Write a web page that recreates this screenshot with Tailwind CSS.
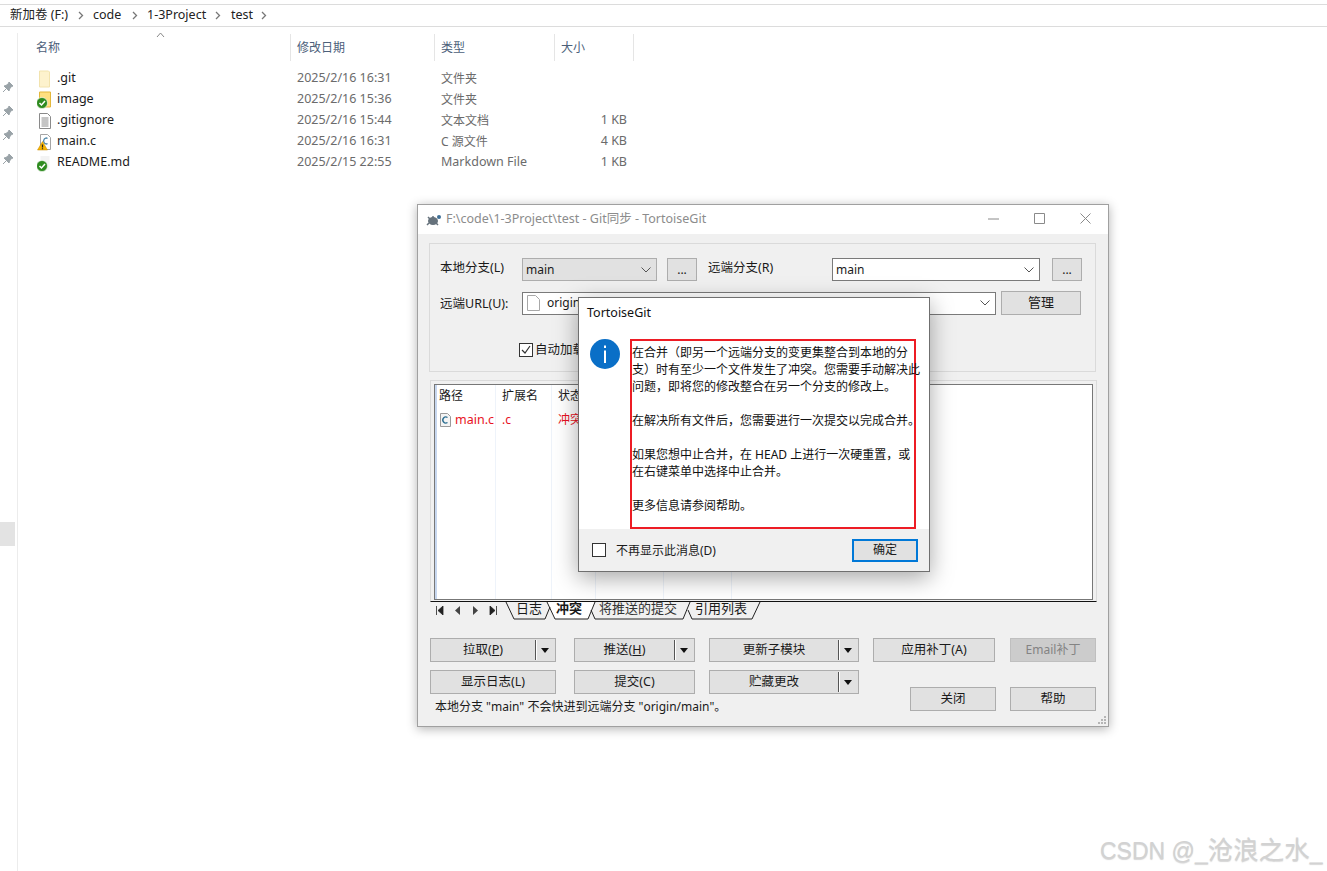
<!DOCTYPE html>
<html lang="zh-CN">
<head>
    <meta charset="UTF-8">
    <meta name="viewport" content="width=device-width, initial-scale=1.0">
    <title>TortoiseGit 合并冲突</title>
    <script src="https://cdn.jsdelivr.net/npm/@tailwindcss/browser@4"></script>
</head>
<body class="bg-white">
<div class="relative w-[1327px] h-[871px] overflow-hidden bg-white text-[12px] text-[#1a1a1a] [font-family:'Noto_Sans','Noto_Sans_CJK_SC',sans-serif]">

    <!-- address bar -->
    <div class="mt-[4px] h-[23px] border-y border-[#dcdcdc] flex items-center text-[12.5px] text-[#222]">
        <span class="ml-[10px] w-[68px]">新加卷 (F:)</span>
        <svg class="w-[6px] h-[9px]" viewBox="0 0 6 9"><path d="M1 1l3.500 3.500L1 8" fill="none" stroke="#777" stroke-width="1.300"/></svg>
        <span class="ml-[9px] w-[39px]">code</span>
        <svg class="w-[6px] h-[9px]" viewBox="0 0 6 9"><path d="M1 1l3.500 3.500L1 8" fill="none" stroke="#777" stroke-width="1.300"/></svg>
        <span class="ml-[9px] w-[68px]">1-3Project</span>
        <svg class="w-[6px] h-[9px]" viewBox="0 0 6 9"><path d="M1 1l3.500 3.500L1 8" fill="none" stroke="#777" stroke-width="1.300"/></svg>
        <span class="ml-[10px] w-[30px]">test</span>
        <svg class="w-[6px] h-[9px]" viewBox="0 0 6 9"><path d="M1 1l3.500 3.500L1 8" fill="none" stroke="#777" stroke-width="1.300"/></svg>
    </div>

    <div class="flex h-[844px]">
        <!-- quick access strip -->
        <div class="w-[18px] shrink-0 border-r border-[#ececec] mt-[6px]">
            <div class="pt-[48px] flex flex-col gap-[12px] pl-[2px]">
                <svg class="w-[12px] h-[12px]" viewBox="0 0 12 12"><path d="M7 1l4 4-1.500.5L7.500 8 7 10 2 5l2-.5L6.500 2.500zM4 8l-3 3" fill="#9aa3a8" stroke="#9aa3a8"/></svg>
                <svg class="w-[12px] h-[12px]" viewBox="0 0 12 12"><path d="M7 1l4 4-1.500.5L7.500 8 7 10 2 5l2-.5L6.500 2.500zM4 8l-3 3" fill="#9aa3a8" stroke="#9aa3a8"/></svg>
                <svg class="w-[12px] h-[12px]" viewBox="0 0 12 12"><path d="M7 1l4 4-1.500.5L7.500 8 7 10 2 5l2-.5L6.500 2.500zM4 8l-3 3" fill="#9aa3a8" stroke="#9aa3a8"/></svg>
                <svg class="w-[12px] h-[12px]" viewBox="0 0 12 12"><path d="M7 1l4 4-1.500.5L7.500 8 7 10 2 5l2-.5L6.500 2.500zM4 8l-3 3" fill="#9aa3a8" stroke="#9aa3a8"/></svg>
            </div>
            <div class="mt-[357px] w-[15px] h-[24px] bg-[#e3e3e3]"></div>
        </div>

        <!-- file list -->
        <div class="flex-1 relative">
            <div class="absolute left-[138px] top-[5px]">
                <svg class="w-[9px] h-[6px]" viewBox="0 0 9 6"><path d="M1 5l3.500-4L8 5" fill="none" stroke="#888" stroke-width="1"/></svg>
            </div>
            <div class="flex h-[27px] mt-[7px] text-[#4c607a]">
                <div class="w-[273px] pl-[18px] border-r border-[#e5e5e5] flex items-center">名称</div>
                <div class="w-[144px] pl-[6px] border-r border-[#e5e5e5] flex items-center">修改日期</div>
                <div class="w-[120px] pl-[6px] border-r border-[#e5e5e5] flex items-center">类型</div>
                <div class="w-[79px] pl-[6px] border-r border-[#e5e5e5] flex items-center">大小</div>
            </div>
            <div class="mt-[7px] pl-[19px] text-[#6b6b6b]">
                <div class="flex items-center h-[21px]">
                    <svg class="w-[20px] h-[18px] shrink-0" viewBox="0 0 20 18"><path d="M2.500 1h9l1 1v15h-10z" fill="#fdf2cd" stroke="#f2e3ae"/></svg>
                    <span class="w-[240px] text-[#1a1a1a] text-[12.5px]">.git</span>
                    <span class="w-[144px] text-[12.5px]">2025/2/16 16:31</span>
                    <span class="w-[120px]">文件夹</span>
                </div>
                <div class="flex items-center h-[21px]">
                    <svg class="w-[20px] h-[18px] shrink-0" viewBox="0 0 20 18"><path d="M2.500 1h11v15h-11z" fill="#ffdf80" stroke="#e3b73c"/><circle cx="5" cy="12" r="5.500" fill="#2e8b1f" stroke="#fff" stroke-width=".6"/><path d="M2.500 12l2 2 3.500-4" fill="none" stroke="#fff" stroke-width="1.500"/></svg>
                    <span class="w-[240px] text-[#1a1a1a] text-[12.5px]">image</span>
                    <span class="w-[144px] text-[12.5px]">2025/2/16 15:36</span>
                    <span class="w-[120px]">文件夹</span>
                </div>
                <div class="flex items-center h-[21px]">
                    <svg class="w-[20px] h-[18px] shrink-0" viewBox="0 0 20 18"><path d="M2.500 1.500h8l3 3v12h-11z" fill="#fff" stroke="#8a8a8a"/><path d="M4.500 6h7M4.500 8h7M4.500 10h7M4.500 12h7M4.500 14h7" stroke="#8a8a8a"/></svg>
                    <span class="w-[240px] text-[#1a1a1a] text-[12.5px]">.gitignore</span>
                    <span class="w-[144px] text-[12.5px]">2025/2/16 15:44</span>
                    <span class="w-[120px]">文本文档</span>
                    <span class="w-[66px] text-right text-[12.5px]">1 KB</span>
                </div>
                <div class="flex items-center h-[21px]">
                    <svg class="w-[20px] h-[18px] shrink-0" viewBox="0 0 20 18"><path d="M3.500 1.500h7l3 3v12h-10z" fill="#fff" stroke="#a5a5a5"/><path d="M10.500 5.500a2.500 3 0 1 0 0 5" fill="none" stroke="#4d86a8" stroke-width="1.300"/><path d="M5.500 8.500l5 8.500H.5z" fill="#f5b400" stroke="#c98a00" stroke-width=".5"/><path d="M5.500 11.500v3M5.500 15.200v1" stroke="#222" stroke-width="1.200"/></svg>
                    <span class="w-[240px] text-[#1a1a1a] text-[12.5px]">main.c</span>
                    <span class="w-[144px] text-[12.5px]">2025/2/16 16:31</span>
                    <span class="w-[120px]">C 源文件</span>
                    <span class="w-[66px] text-right text-[12.5px]">4 KB</span>
                </div>
                <div class="flex items-center h-[21px]">
                    <svg class="w-[20px] h-[18px] shrink-0" viewBox="0 0 20 18"><path d="M3.500 2h9v14h-9z" fill="#f3f3f3"/><circle cx="5" cy="12" r="5.500" fill="#2e8b1f" stroke="#fff" stroke-width=".6"/><path d="M2.500 12l2 2 3.500-4" fill="none" stroke="#fff" stroke-width="1.500"/></svg>
                    <span class="w-[240px] text-[#1a1a1a] text-[12.5px]">README.md</span>
                    <span class="w-[144px] text-[12.5px]">2025/2/15 22:55</span>
                    <span class="w-[120px] text-[12.5px]">Markdown File</span>
                    <span class="w-[66px] text-right text-[12.5px]">1 KB</span>
                </div>
            </div>
        </div>
    </div>

    <!-- Git sync window -->
    <div class="absolute left-[417px] top-[204px] w-[692px] h-[523px] bg-[#f0f0f0] border border-[#a0a0a0] shadow-[0_2px_10px_rgba(0,0,0,0.3)]">
        <div class="h-[29px] bg-white flex items-center pl-[8px] text-[#8c8c8c] text-[12.5px]">
            <svg class="w-[16px] h-[14px] mr-[4px]" viewBox="0 0 16 14"><ellipse cx="7" cy="8" rx="5" ry="4" fill="#66727c"/><circle cx="13" cy="4" r="2" fill="#3f6f96"/><path d="M2 4l2 2M1 12l2-2M12 12l-2-2M7 3v2" stroke="#66727c" stroke-width="1.500"/></svg>
            <span>F:\code\1-3Project\test - Git同步 - TortoiseGit</span>
            <div class="ml-auto -mt-[2px] flex items-center text-[#777]">
                <svg class="w-[11px] h-[11px] mr-[35px]" viewBox="0 0 11 11"><path d="M0 6h11" stroke="#8a8a8a"/></svg>
                <svg class="w-[11px] h-[11px] mr-[35px]" viewBox="0 0 11 11"><path d="M.5.500h10v10H.5z" fill="none" stroke="#8a8a8a"/></svg>
                <svg class="w-[11px] h-[11px] mr-[17px]" viewBox="0 0 11 11"><path d="M.5.500l10 10M10.500.500l-10 10" stroke="#8a8a8a"/></svg>
            </div>
        </div>

        <!-- branch group -->
        <div class="mt-[9px] ml-[11px] w-[667px] h-[129px] border border-[#dadada] relative">
            <div class="flex items-center mt-[14px] h-[23px]">
                <span class="ml-[10px] w-[82px] text-[12.5px] -mt-[2px]">本地分支(L)</span>
                <div class="w-[135px] h-[23px] bg-[#e1e1e1] border border-[#adadad] flex items-center pl-[3px] justify-between pr-[5px]">
                    <span>main</span>
                    <svg class="w-[10px] h-[6px]" viewBox="0 0 10 6"><path d="M.5.500L5 5 9.500.5" fill="none" stroke="#555"/></svg>
                </div>
                <div class="ml-[10px] w-[30px] h-[23px] bg-[#e1e1e1] border border-[#adadad] flex items-center justify-center">...</div>
                <span class="ml-[11px] w-[124px] text-[12.5px] -mt-[2px]">远端分支(R)</span>
                <div class="w-[208px] h-[23px] bg-white border border-[#7a7a7a] flex items-center pl-[3px] justify-between pr-[5px]">
                    <span>main</span>
                    <svg class="w-[10px] h-[6px]" viewBox="0 0 10 6"><path d="M.5.500L5 5 9.500.5" fill="none" stroke="#555"/></svg>
                </div>
                <div class="ml-[12px] w-[30px] h-[23px] bg-[#e1e1e1] border border-[#adadad] flex items-center justify-center">...</div>
            </div>
            <div class="flex items-center mt-[10px] h-[24px]">
                <span class="ml-[10px] w-[82px] text-[12.5px] mt-[2px]">远端URL(U):</span>
                <div class="w-[474px] h-[23px] bg-white border border-[#7a7a7a] flex items-center pl-[4px] pr-[5px] justify-between">
                    <span class="flex items-center gap-[7px]">
                        <svg class="w-[13px] h-[16px]" viewBox="0 0 13 16"><path d="M.5.500h8l4 4v11H.5z" fill="#fff" stroke="#a8a8a8"/></svg>
                        origin
                    </span>
                    <svg class="w-[10px] h-[6px]" viewBox="0 0 10 6"><path d="M.5.500L5 5 9.500.5" fill="none" stroke="#555"/></svg>
                </div>
                <div class="ml-[5px] w-[80px] h-[24px] bg-[#e1e1e1] border border-[#adadad] flex items-center justify-center text-[13px]">管理</div>
            </div>
            <div class="flex items-center mt-[26px] ml-[89px] gap-[2px]">
                <div class="w-[14px] h-[14px] border border-[#333] bg-white flex items-center justify-center">
                    <svg class="w-[10px] h-[10px]" viewBox="0 0 10 10"><path d="M1 5l3 3 5-7" fill="none" stroke="#333" stroke-width="1.200"/></svg>
                </div>
                <span class="text-[12.5px]">自动加载</span>
            </div>
        </div>

        <!-- changes list -->
        <div class="mt-[8px] ml-[12px] w-[667px] h-[222px] border border-[#dadada] border-b-[#111] p-[3px] pb-[1px]">
            <div class="h-full border border-[#777] bg-white flex">
                <div class="w-[61px] border-r border-[#eef3fa] border-l-2 border-l-[#c7d7ef]">
                    <div class="h-[22px] pl-[2px] pt-[2px]">路径</div>
                    <div class="flex items-center gap-[4px] pl-[3px] mt-[4px] text-[#e81123] text-[12.5px]">
                        <svg class="w-[11px] h-[14px] shrink-0" viewBox="0 0 11 14"><path d="M.5.500h7l3 3v10H.5z" fill="#f4f4f4" stroke="#9a9a9a"/><path d="M7.500 4.500a3 3 0 1 0 0 5" fill="none" stroke="#2c6e91" stroke-width="1.400"/></svg>
                        main.c
                    </div>
                </div>
                <div class="w-[56px] border-r border-[#eef3fa] pl-[6px]">
                    <div class="h-[22px] pt-[2px]">扩展名</div>
                    <div class="mt-[4px] text-[#e81123]">.c</div>
                </div>
                <div class="w-[44px] border-r border-[#eef3fa] pl-[6px]">
                    <div class="h-[22px] pt-[2px]">状态</div>
                    <div class="mt-[4px] text-[#e81123]">冲突</div>
                </div>
                <div class="w-[68px] border-r border-[#eef3fa]"></div>
                <div class="w-[68px] border-r border-[#eef3fa]"></div>
            </div>
        </div>

        <!-- tab strip -->
        <div class="relative ml-[17px] h-[18px] pb-[2px] flex items-center">
            <svg class="absolute left-[70px] top-0 w-[270px] h-[18px]" viewBox="0 0 270 18">
                <path d="M42 0l8 17h33l7-17z" fill="#fff"/>
                <path d="M1 0l8 17h31l5-12M42 0l8 17h33l7-17M86 8l4 9h88l7-17M183 8l4 9h60l8-17" fill="none" stroke="#222"/>
            </svg>
            <div class="flex items-center w-[72px] text-[#222]">
                <svg class="w-[9px] h-[9px]" viewBox="0 0 9 9"><path d="M1.500 0v9M8 0v9L3 4.500z" fill="#222" stroke="#222" stroke-width=".8"/></svg>
                <svg class="ml-[9px] w-[9px] h-[9px]" viewBox="0 0 9 9"><path d="M7 0v9L2 4.500z" fill="#444"/></svg>
                <svg class="ml-[9px] w-[9px] h-[9px]" viewBox="0 0 9 9"><path d="M2 0v9l5-4.500z" fill="#444"/></svg>
                <svg class="ml-[9px] w-[9px] h-[9px]" viewBox="0 0 9 9"><path d="M1 0v9l5-4.500zM7.500 0v9" fill="#222" stroke="#222" stroke-width=".8"/></svg>
            </div>
            <div class="relative flex text-[13px] -mt-[2px]">
                <span class="ml-[9px] w-[40px]">日志</span>
                <span class="w-[44px] font-bold">冲突</span>
                <span class="ml-[-1px] w-[94px] text-[#333]">将推送的提交</span>
                <span class="ml-[2px]">引用列表</span>
            </div>
        </div>

        <!-- action buttons -->
        <div class="mt-[18px] ml-[12px] flex">
            <div class="w-[429px]">
                <div class="grid grid-cols-[144px_135px_150px] gap-y-[8px]">
                    <div class="w-[126px] h-[24px] bg-[#e1e1e1] border border-[#adadad] flex items-center text-[12.5px]">
                        <span class="flex-1 text-center">拉取(<u>P</u>)</span>
                        <span class="w-[2px] h-[20px] bg-[#555] border-r border-white"></span>
                        <svg class="ml-[3px] mr-[5px] w-[10px] h-[5px]" viewBox="0 0 10 5"><path d="M1 0h8L5 5z" fill="#111"/></svg>
                    </div>
                    <div class="w-[121px] h-[24px] bg-[#e1e1e1] border border-[#adadad] flex items-center text-[12.5px]">
                        <span class="flex-1 text-center">推送(<u>H</u>)</span>
                        <span class="w-[2px] h-[20px] bg-[#555] border-r border-white"></span>
                        <svg class="ml-[3px] mr-[5px] w-[10px] h-[5px]" viewBox="0 0 10 5"><path d="M1 0h8L5 5z" fill="#111"/></svg>
                    </div>
                    <div class="w-[150px] h-[24px] bg-[#e1e1e1] border border-[#adadad] flex items-center text-[12.5px]">
                        <span class="flex-1 text-center">更新子模块</span>
                        <span class="w-[2px] h-[20px] bg-[#555] border-r border-white"></span>
                        <svg class="ml-[3px] mr-[5px] w-[10px] h-[5px]" viewBox="0 0 10 5"><path d="M1 0h8L5 5z" fill="#111"/></svg>
                    </div>
                    <div class="w-[126px] h-[24px] bg-[#e1e1e1] border border-[#adadad] flex items-center justify-center text-[12.5px]">显示日志(L)</div>
                    <div class="w-[121px] h-[24px] bg-[#e1e1e1] border border-[#adadad] flex items-center justify-center text-[12.5px]">提交(C)</div>
                    <div class="w-[150px] h-[24px] bg-[#e1e1e1] border border-[#adadad] flex items-center text-[12.5px]">
                        <span class="flex-1 text-center">贮藏更改</span>
                        <span class="w-[2px] h-[20px] bg-[#555] border-r border-white"></span>
                        <svg class="ml-[3px] mr-[5px] w-[10px] h-[5px]" viewBox="0 0 10 5"><path d="M1 0h8L5 5z" fill="#111"/></svg>
                    </div>
                </div>
                <div class="ml-[5px] mt-[4px] text-[12px]">本地分支 "main" 不会快进到远端分支 "origin/main"。</div>
            </div>
            <div class="ml-[14px] w-[223px]">
                <div class="flex justify-between">
                    <div class="w-[122px] h-[24px] bg-[#e1e1e1] border border-[#adadad] flex items-center justify-center text-[12.5px]">应用补丁(A)</div>
                    <div class="w-[86px] h-[24px] bg-[#cccccc] border border-[#bfbfbf] flex items-center justify-center text-[#838383] text-[12px]">Email补丁</div>
                </div>
                <div class="mt-[25px] flex justify-end gap-[14px]">
                    <div class="w-[86px] h-[24px] bg-[#e1e1e1] border border-[#adadad] flex items-center justify-center text-[12.5px]">关闭</div>
                    <div class="w-[86px] h-[24px] bg-[#e1e1e1] border border-[#adadad] flex items-center justify-center text-[12.5px]">帮助</div>
                </div>
            </div>
        </div>

        <!-- resize grip -->
        <svg class="absolute right-[2px] bottom-[2px] w-[9px] h-[9px]" viewBox="0 0 9 9"><path d="M7 1h2v2H7zM4 4h2v2H4zM7 4h2v2H7zM1 7h2v2H1zM4 7h2v2H4zM7 7h2v2H7z" fill="#b5b5b5"/></svg>
    </div>

    <!-- message box -->
    <div class="absolute left-[578px] top-[297px] w-[352px] h-[275px] bg-white border border-[#6f6f6f] shadow-[0_6px_22px_rgba(0,0,0,0.35)] flex flex-col">
        <div class="h-[30px] pl-[8px] flex items-center text-[12.5px] text-[#111]">TortoiseGit</div>
        <div class="flex-1 flex pl-[11px] pt-[11px]">
            <svg class="w-[30px] h-[30px] shrink-0" viewBox="0 0 30 30"><circle cx="15" cy="15" r="15" fill="#0a6fc7"/><path d="M14 6.500h2v2.500h-2zM14 11.500h2V24h-2z" fill="#fff"/></svg>
            <div class="ml-[10px] w-[286px] h-[190px] border-2 border-[#ed1c24]">
                <div class="w-[290px] pt-[3px] text-[12px] leading-[17px] text-[#111]">
                    <p>在合并（即另一个远端分支的变更集整合到本地的分<br>支）时有至少一个文件发生了冲突。您需要手动解决此<br>问题，即将您的修改整合在另一个分支的修改上。</p>
                    <p class="mt-[17px]">在解决所有文件后，您需要进行一次提交以完成合并。</p>
                    <p class="mt-[17px]">如果您想中止合并，在 HEAD 上进行一次硬重置，或<br>在右键菜单中选择中止合并。</p>
                    <p class="mt-[17px]">更多信息请参阅帮助。</p>
                </div>
            </div>
        </div>
        <div class="h-[42px] bg-[#f0f0f0] flex items-center pl-[13px]">
            <div class="w-[14px] h-[14px] border border-[#333] bg-white"></div>
            <span class="ml-[10px] text-[12px] mt-[1px]">不再显示此消息(D)</span>
            <div class="ml-auto mr-[11px] w-[66px] h-[23px] bg-[#e1e1e1] border-2 border-[#0078d7] flex items-center justify-center">确定</div>
        </div>
    </div>

    <!-- watermark -->
    <div class="absolute left-[1100px] top-[833px] text-[23px] leading-[34px] text-[#d2d2d2] [text-shadow:0_1px_1px_rgba(120,120,120,0.3)] [font-family:'Liberation_Sans','Noto_Sans_CJK_SC',sans-serif] whitespace-nowrap">CSDN @_<span class="text-[25.5px]">沧浪之水</span>_</div>
</div>
</body>
</html>
